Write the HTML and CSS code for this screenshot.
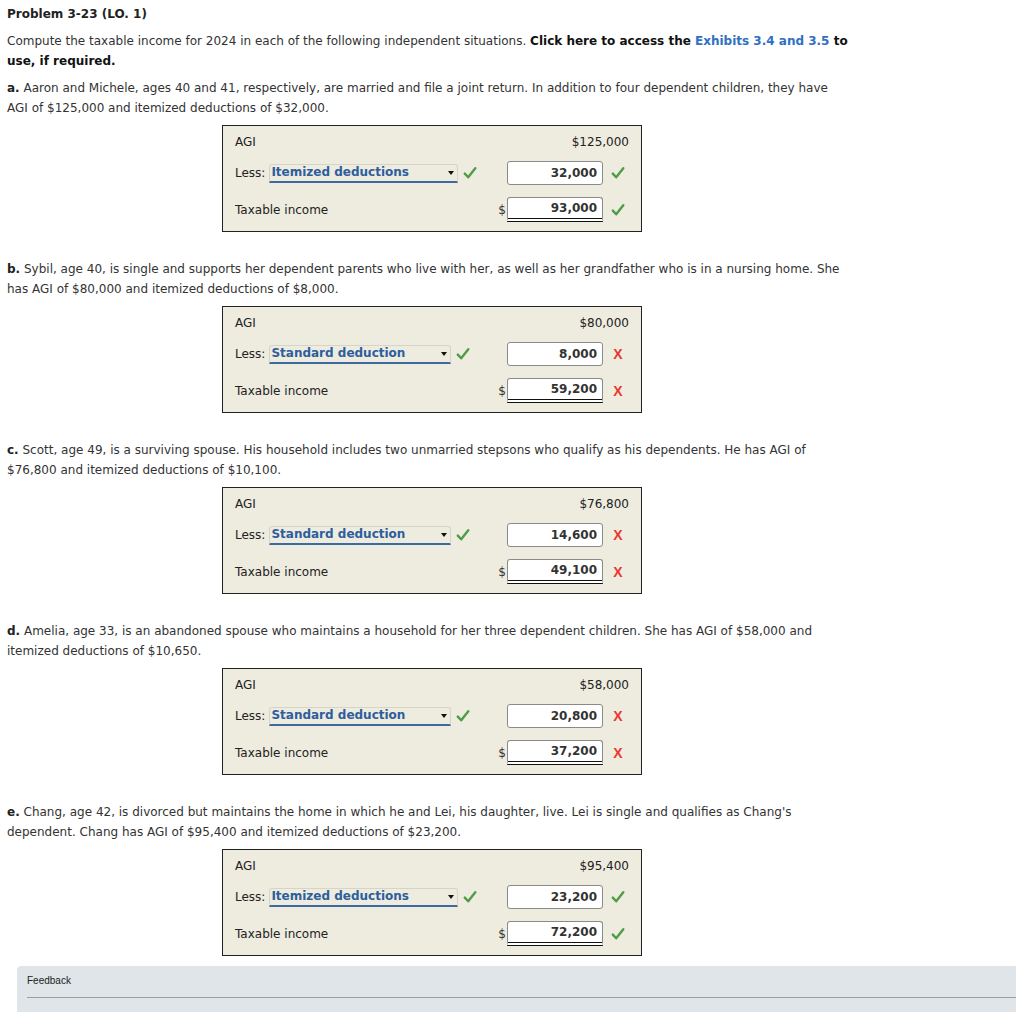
FILE: index.html
```html
<!DOCTYPE html>
<html>
<head>
<meta charset="utf-8">
<link rel="stylesheet" href="styles.css">
</head>
<body>
<div class="page">
  <p class="title">Problem 3-23 (LO. 1)</p>
  <p class="intro">Compute the taxable income for 2024 in each of the following independent situations. <b>Click here to access the <span class="link">Exhibits 3.4 and 3.5</span> to use, if required.</b></p>

  <section class="part">
    <p class="q"><b>a.</b> Aaron and Michele, ages 40 and 41, respectively, are married and file a joint return. In addition to four dependent children, they have AGI of $125,000 and itemized deductions of $32,000.</p>
    <div class="box">
      <div class="row row-agi"><span>AGI</span><span class="amt">$125,000</span></div>
      <div class="row row-less">
        <span class="lbl">Less:</span>
        <span class="sel sel-item">Itemized deductions<i class="arrow"></i></span>
        <span class="mark ok"><svg viewBox="0 0 14 14"><path d="M1.8 7.6 L5.2 11.3 L12.3 2.2"/></svg></span>
        <span class="fill"></span>
        <span class="inp">32,000</span>
        <span class="mark ok end"><svg viewBox="0 0 14 14"><path d="M1.8 7.6 L5.2 11.3 L12.3 2.2"/></svg></span>
      </div>
      <div class="row row-ti">
        <span class="lbl">Taxable income</span>
        <span class="fill"></span>
        <span class="dollar">$</span>
        <span class="inp total">93,000</span>
        <span class="mark ok end"><svg viewBox="0 0 14 14"><path d="M1.8 7.6 L5.2 11.3 L12.3 2.2"/></svg></span>
      </div>
    </div>
  </section>

  <section class="part">
    <p class="q"><b>b.</b> Sybil, age 40, is single and supports her dependent parents who live with her, as well as her grandfather who is in a nursing home. She has AGI of $80,000 and itemized deductions of $8,000.</p>
    <div class="box">
      <div class="row row-agi"><span>AGI</span><span class="amt">$80,000</span></div>
      <div class="row row-less">
        <span class="lbl">Less:</span>
        <span class="sel sel-std">Standard deduction<i class="arrow"></i></span>
        <span class="mark ok"><svg viewBox="0 0 14 14"><path d="M1.8 7.6 L5.2 11.3 L12.3 2.2"/></svg></span>
        <span class="fill"></span>
        <span class="inp">8,000</span>
        <span class="mark bad end">X</span>
      </div>
      <div class="row row-ti">
        <span class="lbl">Taxable income</span>
        <span class="fill"></span>
        <span class="dollar">$</span>
        <span class="inp total">59,200</span>
        <span class="mark bad end">X</span>
      </div>
    </div>
  </section>

  <section class="part">
    <p class="q"><b>c.</b> Scott, age 49, is a surviving spouse. His household includes two unmarried stepsons who qualify as his dependents. He has AGI of $76,800 and itemized deductions of $10,100.</p>
    <div class="box">
      <div class="row row-agi"><span>AGI</span><span class="amt">$76,800</span></div>
      <div class="row row-less">
        <span class="lbl">Less:</span>
        <span class="sel sel-std">Standard deduction<i class="arrow"></i></span>
        <span class="mark ok"><svg viewBox="0 0 14 14"><path d="M1.8 7.6 L5.2 11.3 L12.3 2.2"/></svg></span>
        <span class="fill"></span>
        <span class="inp">14,600</span>
        <span class="mark bad end">X</span>
      </div>
      <div class="row row-ti">
        <span class="lbl">Taxable income</span>
        <span class="fill"></span>
        <span class="dollar">$</span>
        <span class="inp total">49,100</span>
        <span class="mark bad end">X</span>
      </div>
    </div>
  </section>

  <section class="part">
    <p class="q"><b>d.</b> Amelia, age 33, is an abandoned spouse who maintains a household for her three dependent children. She has AGI of $58,000 and itemized deductions of $10,650.</p>
    <div class="box">
      <div class="row row-agi"><span>AGI</span><span class="amt">$58,000</span></div>
      <div class="row row-less">
        <span class="lbl">Less:</span>
        <span class="sel sel-std">Standard deduction<i class="arrow"></i></span>
        <span class="mark ok"><svg viewBox="0 0 14 14"><path d="M1.8 7.6 L5.2 11.3 L12.3 2.2"/></svg></span>
        <span class="fill"></span>
        <span class="inp">20,800</span>
        <span class="mark bad end">X</span>
      </div>
      <div class="row row-ti">
        <span class="lbl">Taxable income</span>
        <span class="fill"></span>
        <span class="dollar">$</span>
        <span class="inp total">37,200</span>
        <span class="mark bad end">X</span>
      </div>
    </div>
  </section>

  <section class="part">
    <p class="q"><b>e.</b> Chang, age 42, is divorced but maintains the home in which he and Lei, his daughter, live. Lei is single and qualifies as Chang's dependent. Chang has AGI of $95,400 and itemized deductions of $23,200.</p>
    <div class="box">
      <div class="row row-agi"><span>AGI</span><span class="amt">$95,400</span></div>
      <div class="row row-less">
        <span class="lbl">Less:</span>
        <span class="sel sel-item">Itemized deductions<i class="arrow"></i></span>
        <span class="mark ok"><svg viewBox="0 0 14 14"><path d="M1.8 7.6 L5.2 11.3 L12.3 2.2"/></svg></span>
        <span class="fill"></span>
        <span class="inp">23,200</span>
        <span class="mark ok end"><svg viewBox="0 0 14 14"><path d="M1.8 7.6 L5.2 11.3 L12.3 2.2"/></svg></span>
      </div>
      <div class="row row-ti">
        <span class="lbl">Taxable income</span>
        <span class="fill"></span>
        <span class="dollar">$</span>
        <span class="inp total">72,200</span>
        <span class="mark ok end"><svg viewBox="0 0 14 14"><path d="M1.8 7.6 L5.2 11.3 L12.3 2.2"/></svg></span>
      </div>
    </div>
  </section>
</div>
<div class="feedback">
  <div class="fb-head">Feedback</div>
</div>
</body>
</html>
```

FILE: styles.css
```css
html, body {
  margin: 0;
  padding: 0;
  background: #fff;
}
body {
  font-family: "DejaVu Sans", Verdana, sans-serif;
  font-size: 12px;
  color: #333;
  overflow: hidden;
}
.page {
  width: 850px;
  padding: 4px 7px 0 7px;
}
p {
  margin: 0;
  line-height: 20px;
}
.title {
  font-weight: bold;
  color: #222;
  margin-bottom: 7px;
}
.intro,
.q {
  max-width: 843px;
}
.intro {
  margin-bottom: 7px;
}
.intro b {
  color: #111;
}
.link {
  color: #2f6fc4;
}
.q b {
  color: #222;
}
.part {
  margin-bottom: 27px;
}
.part:last-child {
  margin-bottom: 0;
}
.box {
  box-sizing: border-box;
  width: 420px;
  height: 107px;
  margin: 7px auto 0 auto;
  border: 1px solid #222;
  background: #eeebdf;
  padding: 6px 0 0 12px;
  color: #222;
}
.row {
  display: flex;
  align-items: center;
}
.row-agi {
  height: 20px;
  justify-content: space-between;
  padding-right: 12px;
}
.row-less {
  margin-top: 9px;
  height: 24px;
}
.row-ti {
  margin-top: 12px;
  height: 25px;
}
.lbl {
  white-space: nowrap;
}
.sel {
  position: relative;
  margin-left: 4px;
  height: 16px;
  line-height: 15px;
  font-weight: bold;
  color: #2c5e9e;
  border: 1px solid #d6d3c8;
  border-bottom: 2px solid #3d6aa0;
  border-radius: 3px 3px 0 0;
  padding-left: 1px;
  box-sizing: content-box;
}
.sel-item { width: 186px; }
.sel-std { width: 179px; }
.arrow {
  position: absolute;
  right: 3px;
  top: 6px;
  width: 0;
  height: 0;
  border-left: 3.5px solid transparent;
  border-right: 3.5px solid transparent;
  border-top: 4px solid #111;
}
.mark {
  width: 14px;
  height: 14px;
  margin-left: 5px;
  display: inline-flex;
  align-items: center;
  justify-content: center;
}
.mark svg {
  width: 14px;
  height: 14px;
}
.mark.ok path {
  fill: none;
  stroke: #4f9d48;
  stroke-width: 2.4;
  stroke-linecap: round;
  stroke-linejoin: round;
}
.mark.bad {
  color: #e8382f;
  font-weight: bold;
  font-size: 14px;
  font-family: "Liberation Sans", Arial, sans-serif;
}
.mark.end {
  margin-left: 8px;
  margin-right: 16px;
}
.fill {
  flex: 1;
}
.inp {
  box-sizing: border-box;
  width: 96px;
  height: 24px;
  background: #fff;
  border: 1px solid #8a8a8a;
  border-radius: 3px;
  text-align: right;
  font-weight: bold;
  color: #333;
  padding-right: 5px;
  line-height: 22px;
}
.inp.total {
  border-bottom: 4px double #111;
  border-radius: 3px 3px 0 0;
  line-height: 21px;
  height: 25px;
}
.dollar {
  margin-right: 1px;
  color: #333;
}
.feedback {
  margin: 10px 0 0 17px;
  background: #dfe5e8;
  border-radius: 4px 0 0 0;
  height: 60px;
  padding: 0 0 0 10px;
}
.fb-head {
  font-family: "Liberation Sans", Arial, sans-serif;
  font-size: 10px;
  color: #222;
  height: 31px;
  line-height: 30px;
  border-bottom: 1px solid #9aa0a4;
}
```
